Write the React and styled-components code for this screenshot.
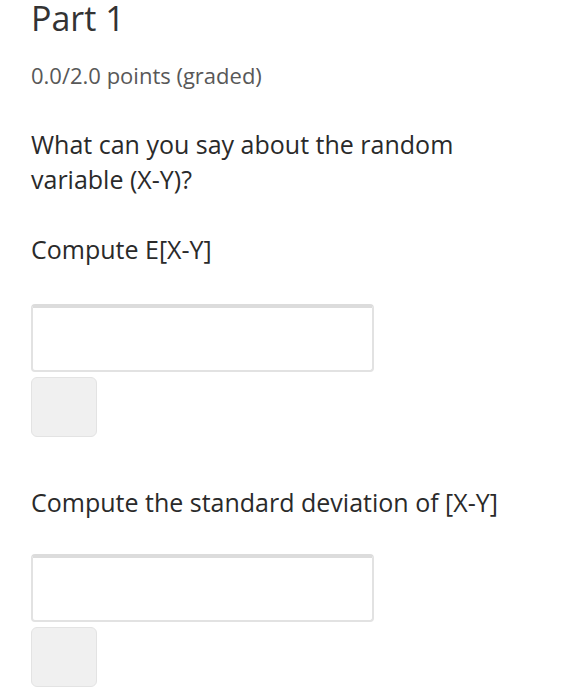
import React from "react";
import styled, { createGlobalStyle } from "styled-components";

const Global = createGlobalStyle`
  html, body { margin: 0; padding: 0; background: #fff; }
  body { font-family: "Open Sans", "Noto Sans", sans-serif; }
`;

const Page = styled.div`
  padding: 0 31px;
  width: 567px;
  box-sizing: border-box;
`;

const Title = styled.h2`
  margin: 0;
  font-size: 34px;
  line-height: 36px;
  font-weight: 400;
  color: #333;
`;

const Points = styled.div`
  margin-top: 25px;
  font-size: 22px;
  line-height: 28px;
  color: #585858;
`;

const Question = styled.p`
  margin: 0;
  margin-top: ${p => p.$mt}px;
  font-size: 25px;
  line-height: 35px;
  color: #2a2a2a;
`;

const Field = styled.div`
  width: 343px;
  height: 68px;
  box-sizing: border-box;
  border: 2px solid #e2e2e2;
  border-top: 4px solid #dcdcdc;
  border-radius: 4px;
  background: #fff;
  margin-top: ${p => p.$mt}px;
`;

const Check = styled.div`
  width: 66px;
  height: 60px;
  box-sizing: border-box;
  margin-top: 5px;
  background: #f0f0f0;
  border: 1px solid #e3e3e3;
  border-radius: 6px;
`;

export default function App() {
  return (
    <Page>
      <Global />
      <Title>Part 1</Title>
      <Points>0.0/2.0 points (graded)</Points>
      <Question $mt={38}>What can you say about the random<br />variable (X-Y)?</Question>
      <Question $mt={35}>Compute E[X-Y]</Question>
      <Field $mt={37} />
      <Check />
      <Question $mt={48}>Compute the standard deviation of [X-Y]</Question>
      <Field $mt={34} />
      <Check />
    </Page>
  );
}
